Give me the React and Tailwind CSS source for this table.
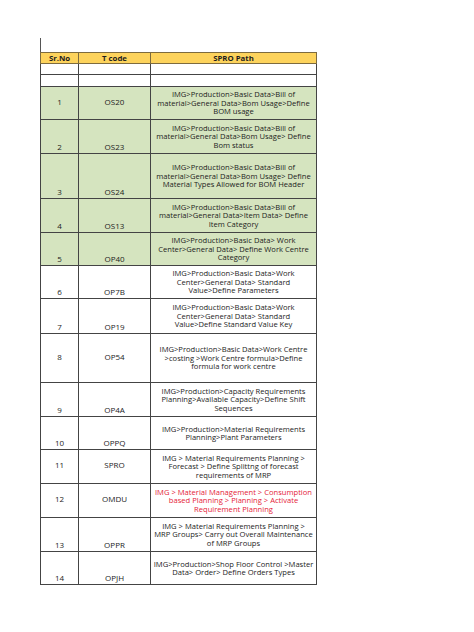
import React from "react";

const rows = [
  { no: "1", code: "OS20", mid: true, green: true, h: "h-[33px]", path: ["IMG>Production>Basic Data>Bill of", "material>General Data>Bom Usage>Define", "BOM usage"] },
  { no: "2", code: "OS23", green: true, h: "h-[34px]", path: ["IMG>Production>Basic Data>Bill of", "material>General Data>Bom Usage> Define", "Bom status"] },
  { no: "3", code: "OS24", green: true, h: "h-[45px]", path: ["IMG>Production>Basic Data>Bill of", "material>General Data>Bom Usage> Define", "Material Types Allowed for BOM Header"] },
  { no: "4", code: "OS13", green: true, h: "h-[34px]", path: ["IMG>Production>Basic Data>Bill of", "material>General Data>Item Data> Define", "Item Category"] },
  { no: "5", code: "OP40", green: true, h: "h-[33px]", path: ["IMG>Production>Basic Data> Work", "Center>General Data> Define Work Centre", "Category"] },
  { no: "6", code: "OP7B", h: "h-[33px]", path: ["IMG>Production>Basic Data>Work", "Center>General Data> Standard", "Value>Define Parameters"] },
  { no: "7", code: "OP19", h: "h-[35px]", path: ["IMG>Production>Basic Data>Work", "Center>General Data> Standard", "Value>Define Standard Value Key"] },
  { no: "8", code: "OP54", mid: true, h: "h-[49px]", path: ["IMG>Production>Basic Data>Work Centre", ">costing >Work Centre formula>Define", "formula for work centre"] },
  { no: "9", code: "OP4A", h: "h-[34px]", path: ["IMG>Production>Capacity Requirements", "Planning>Available Capacity>Define Shift", "Sequences"] },
  { no: "10", code: "OPPQ", h: "h-[33px]", path: ["IMG>Production>Material Requirements", "Planning>Plant Parameters"] },
  { no: "11", code: "SPRO", mid: true, h: "h-[34px]", path: ["IMG > Material Requirements Planning >", "Forecast > Define Splittng of forecast", "requirements of MRP"] },
  { no: "12", code: "OMDU", mid: true, red: true, h: "h-[34px]", path: ["IMG > Material Management > Consumption", "based Planning > Planning > Activate", "Requirement Planning"] },
  { no: "13", code: "OPPR", h: "h-[34px]", path: ["IMG > Material Requirements Planning >", "MRP Groups> Carry out Overall Maintenance", "of MRP Groups"] },
  { no: "14", code: "OPJH", h: "h-[33px]", path: ["IMG>Production>Shop Floor Control >Master", "Data> Order> Define Orders Types"] },
];

export default function App() {
  return (
    <div className="min-h-screen w-[474px] bg-white pt-[38px] pl-[40px] font-['Open_Sans','Liberation_Sans',sans-serif] text-[7.6px] text-[#1c1c1c]">
      <div className="w-px h-[14px] bg-[#555]" />
      <table className="border-collapse table-fixed w-[276px]">
        <colgroup>
          <col className="w-[38px]" />
          <col className="w-[72px]" />
          <col className="w-[166px]" />
        </colgroup>
        <thead>
          <tr className="h-[11px] bg-[#fdd35c] font-bold leading-[9px] text-[7.8px]">
            <th className="border border-[#7d6b3e] text-center">Sr.No</th>
            <th className="border border-[#7d6b3e] text-center">T code</th>
            <th className="border border-[#7d6b3e] text-center">SPRO Path</th>
          </tr>
        </thead>
        <tbody>
          <tr className="h-[11px]">
            <td className="border border-[#444]" />
            <td className="border border-[#444]" />
            <td className="border border-[#444]" />
          </tr>
          <tr className="h-[12px]">
            <td className="border border-[#444]" />
            <td className="border border-[#444]" />
            <td className="border border-[#444]" />
          </tr>
          {rows.map((r) => (
            <tr key={r.no} className={`${r.h} ${r.green ? "bg-[#d5e4bf]" : "bg-white"} leading-[8.4px]`}>
              <td className={`border border-[#444] text-center text-[8px] pb-[2px] ${r.mid ? "align-middle" : "align-bottom"}`}>{r.no}</td>
              <td className={`border border-[#444] text-center text-[8px] pb-[2px] ${r.mid ? "align-middle" : "align-bottom"}`}>{r.code}</td>
              <td className={`border border-[#444] text-center align-middle whitespace-nowrap ${r.red ? "text-[#e52238]" : ""}`}>
                {r.path.map((line, i) => (
                  <div key={i}>{line}</div>
                ))}
              </td>
            </tr>
          ))}
        </tbody>
      </table>
    </div>
  );
}
